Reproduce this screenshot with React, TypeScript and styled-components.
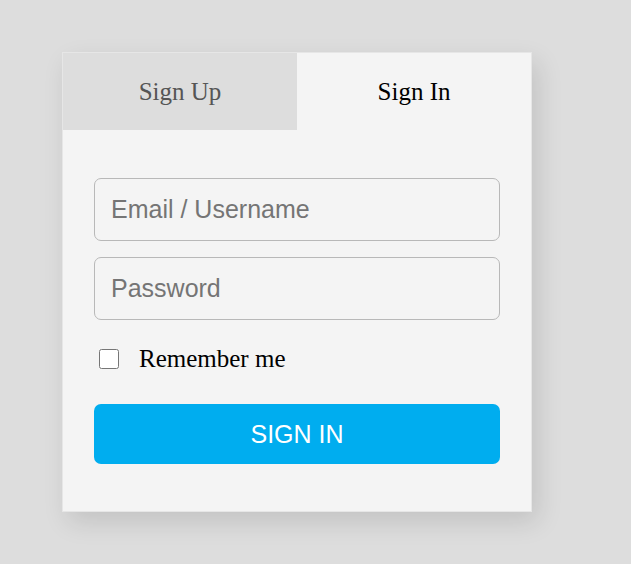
import React, { useState } from "react";
import styled, { createGlobalStyle } from "styled-components";

const GlobalStyle = createGlobalStyle`
	html, body {
		margin: 0;
		background: #dddddd;
	}
	body {
		font-family: "Liberation Serif", "Times New Roman", serif;
	}
`;

export default function App() {
	const [tab, setTab] = useState<"up" | "in">("in");
	const [remember, setRemember] = useState(false);

	return (
		<>
			<GlobalStyle />
			<Page>
				<Card>
					<Tabs>
						<Tab $active={tab === "up"} onClick={() => setTab("up")}>
							Sign Up
						</Tab>
						<Tab $active={tab === "in"} onClick={() => setTab("in")}>
							Sign In
						</Tab>
					</Tabs>
					<Form onSubmit={(e) => e.preventDefault()}>
						<Field type="text" placeholder="Email / Username" />
						<Field type="password" placeholder="Password" />
						<CheckRow>
							<Check
								type="checkbox"
								checked={remember}
								onChange={(e) => setRemember(e.target.checked)}
							/>
							Remember me
						</CheckRow>
						<SubmitButton type="submit">SIGN IN</SubmitButton>
					</Form>
				</Card>
			</Page>
		</>
	);
}

const Page = styled.div`
	min-height: 564px;
	box-sizing: border-box;
	padding: 52px 0 0 62px;
`;

const Card = styled.div`
	width: 470px;
	box-sizing: border-box;
	background: #f4f4f4;
	border: 1px solid #e6e6e6;
	box-shadow: 6px 10px 24px rgba(0, 0, 0, 0.12);
`;

const Tabs = styled.div`
	display: grid;
	grid-template-columns: 1fr 1fr;
`;

const Tab = styled.button<{ $active: boolean }>`
	height: 77px;
	border: none;
	margin: 0;
	padding: 0;
	font-family: "Liberation Serif", "Times New Roman", serif;
	font-size: 25px;
	cursor: pointer;
	background: ${(p) => (p.$active ? "#f4f4f4" : "#dddddd")};
	color: ${(p) => (p.$active ? "#000000" : "#555555")};
`;

const Form = styled.form`
	display: flex;
	flex-direction: column;
	padding: 48px 31px 47px;
`;

const Field = styled.input`
	height: 63px;
	box-sizing: border-box;
	margin-bottom: 16px;
	padding: 0 16px;
	border: 1px solid #b8b8b8;
	border-radius: 7px;
	background: #f4f4f4;
	font-family: "Liberation Sans", Arial, sans-serif;
	font-size: 25px;
	color: #333333;
	outline: none;

	&::placeholder {
		color: #757575;
	}
`;

const CheckRow = styled.label`
	display: flex;
	align-items: center;
	gap: 20px;
	height: 46px;
	margin: 0 0 22px 5px;
	font-size: 25px;
	color: #000000;
	cursor: pointer;
`;

const Check = styled.input`
	width: 20px;
	height: 20px;
	margin: 0;
`;

const SubmitButton = styled.button`
	height: 60px;
	border: none;
	border-radius: 7px;
	background: #00adef;
	color: #ffffff;
	font-family: "Liberation Sans", Arial, sans-serif;
	font-size: 25px;
	cursor: pointer;
`;
